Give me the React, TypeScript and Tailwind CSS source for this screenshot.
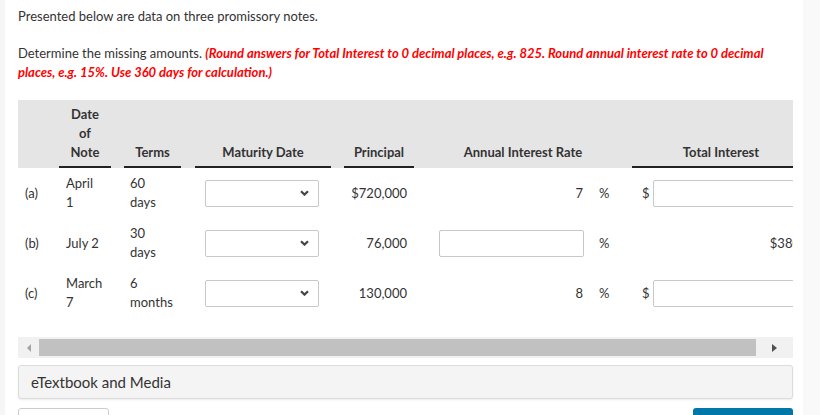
import React from 'react';

const Chevron = () => (
  <svg width="9" height="6" viewBox="0 0 9 6" className="text-[#444]">
    <path d="M1 1.2 L4.5 4.6 L8 1.2" fill="none" stroke="currentColor" strokeWidth="2.2" />
  </svg>
);

function Select() {
  return (
    <div className="w-[114px] h-[27px] border border-[#c8c8c8] rounded-[2px] bg-white flex items-center justify-end pr-[9px]">
      <Chevron />
    </div>
  );
}

function TextBox({ w }: { w: string }) {
  return <div className={`${w} h-[27px] border border-[#c8c8c8] rounded-[2px] bg-white`} />;
}

type Row = {
  label: string;
  date: string[];
  terms: string[];
  principal: string;
  rate: string | null;
  total: string | null;
};

const rows: Row[] = [
  { label: '(a)', date: ['April', '1'], terms: ['60', 'days'], principal: '$720,000', rate: '7', total: null },
  { label: '(b)', date: ['July 2'], terms: ['30', 'days'], principal: '76,000', rate: null, total: '$380' },
  { label: '(c)', date: ['March', '7'], terms: ['6', 'months'], principal: '130,000', rate: '8', total: null },
];

export default function App() {
  return (
    <div
      className="w-[820px] h-[415px] overflow-hidden flex bg-white text-[#333] text-[13px]"
      style={{ fontFamily: 'Lato, "Open Sans", sans-serif' }}
    >
      <div className="w-[5px] bg-[#f6f6f6] shrink-0" />
      <div className="w-[798px] shrink-0 pl-[13px] pr-[10px] pt-[7px]">
        <p className="leading-[19px]">Presented below are data on three promissory notes.</p>
        <p className="mt-[18px] leading-[19px]">
          Determine the missing amounts.{' '}
          <span className="text-[#ff0000] font-bold italic">
            (Round answers for Total Interest to 0 decimal places, e.g. 825. Round annual interest rate to 0 decimal
            places, e.g. 15%. Use 360 days for calculation.)
          </span>
        </p>

        {/* table, clipped on the right */}
        <div className="mt-[18px] w-[775px] overflow-hidden">
          <div className="w-[810px]">
            {/* header */}
            <div className="h-[68px] bg-[#e5e5e5] flex items-end font-bold leading-[19px]">
              <div className="w-[41px]" />
              <div className="w-[52px] text-center border-b-2 border-[#222] pb-[4px]">
                Date
                <br />
                of
                <br />
                Note
              </div>
              <div className="w-[13px]" />
              <div className="w-[57px] text-center border-b-2 border-[#222] pb-[4px]">Terms</div>
              <div className="w-[14px]" />
              <div className="w-[136px] text-center border-b-2 border-[#222] pb-[4px]">Maturity Date</div>
              <div className="w-[13px]" />
              <div className="w-[70px] text-center border-b-2 border-[#222] pb-[4px]">Principal</div>
              <div className="w-[218px] text-center pb-[6px]">Annual Interest Rate</div>
              <div className="w-[178px] text-center border-b-2 border-[#222] pb-[4px] whitespace-nowrap">
                Total Interest
              </div>
            </div>

            {rows.map((r) => (
              <div key={r.label} className="h-[50px] flex items-center leading-[19px]">
                <div className="w-[41px] pl-[7px]">{r.label}</div>
                <div className="w-[52px] pl-[7px]">
                  {r.date.map((d) => (
                    <div key={d}>{d}</div>
                  ))}
                </div>
                <div className="w-[13px]" />
                <div className="w-[57px] pl-[6px]">
                  {r.terms.map((d) => (
                    <div key={d}>{d}</div>
                  ))}
                </div>
                <div className="w-[14px]" />
                <div className="w-[136px] pl-[10px]">
                  <Select />
                </div>
                <div className="w-[13px]" />
                <div className="w-[70px] text-right pr-[7px]">{r.principal}</div>
                <div className="w-[218px] pl-[25px] flex items-center">
                  {r.rate ? (
                    <div className="w-[145px] text-right pr-[1px]">{r.rate}</div>
                  ) : (
                    <TextBox w="w-[145px]" />
                  )}
                  <span className="ml-[15px]">%</span>
                </div>
                <div className="w-[178px] flex items-center">
                  {r.total ? (
                    <div className="w-[168px] text-right">{r.total}</div>
                  ) : (
                    <>
                      <span className="ml-[10px] w-[11px]">$</span>
                      <TextBox w="w-[150px]" />
                    </>
                  )}
                </div>
              </div>
            ))}
          </div>

          {/* horizontal scrollbar */}
          <div className="mt-[19px] h-[21px] bg-[#f1f1f1] flex items-center">
            <div className="w-[21px] flex items-center justify-center">
              <div className="w-0 h-0 border-y-[4px] border-y-transparent border-r-[4px] border-r-[#a3a3a3]" />
            </div>
            <div className="w-[717px] h-[17px] bg-[#c1c1c1]" />
            <div className="flex-1 flex items-center justify-center">
              <div className="w-0 h-0 border-y-[4px] border-y-transparent border-l-[5px] border-l-[#505050]" />
            </div>
          </div>
        </div>

        <div className="mt-[7px] w-[775px] h-[34px] bg-[#f4f4f4] border border-[#dcdcdc] rounded-[3px] shadow-[0_1px_2px_rgba(0,0,0,0.08)] flex items-center pl-[12px] text-[15px] text-[#333]">
          eTextbook and Media
        </div>

        <div className="mt-[9px] w-[775px] flex justify-between">
          <div className="w-[91px] h-[20px] border border-[#ccc] rounded-[3px] bg-white" />
          <div className="w-[100px] h-[20px] rounded-[3px] bg-[#0077a9]" />
        </div>
      </div>
      <div className="flex-1 bg-[#f9f9f9]" />
    </div>
  );
}
